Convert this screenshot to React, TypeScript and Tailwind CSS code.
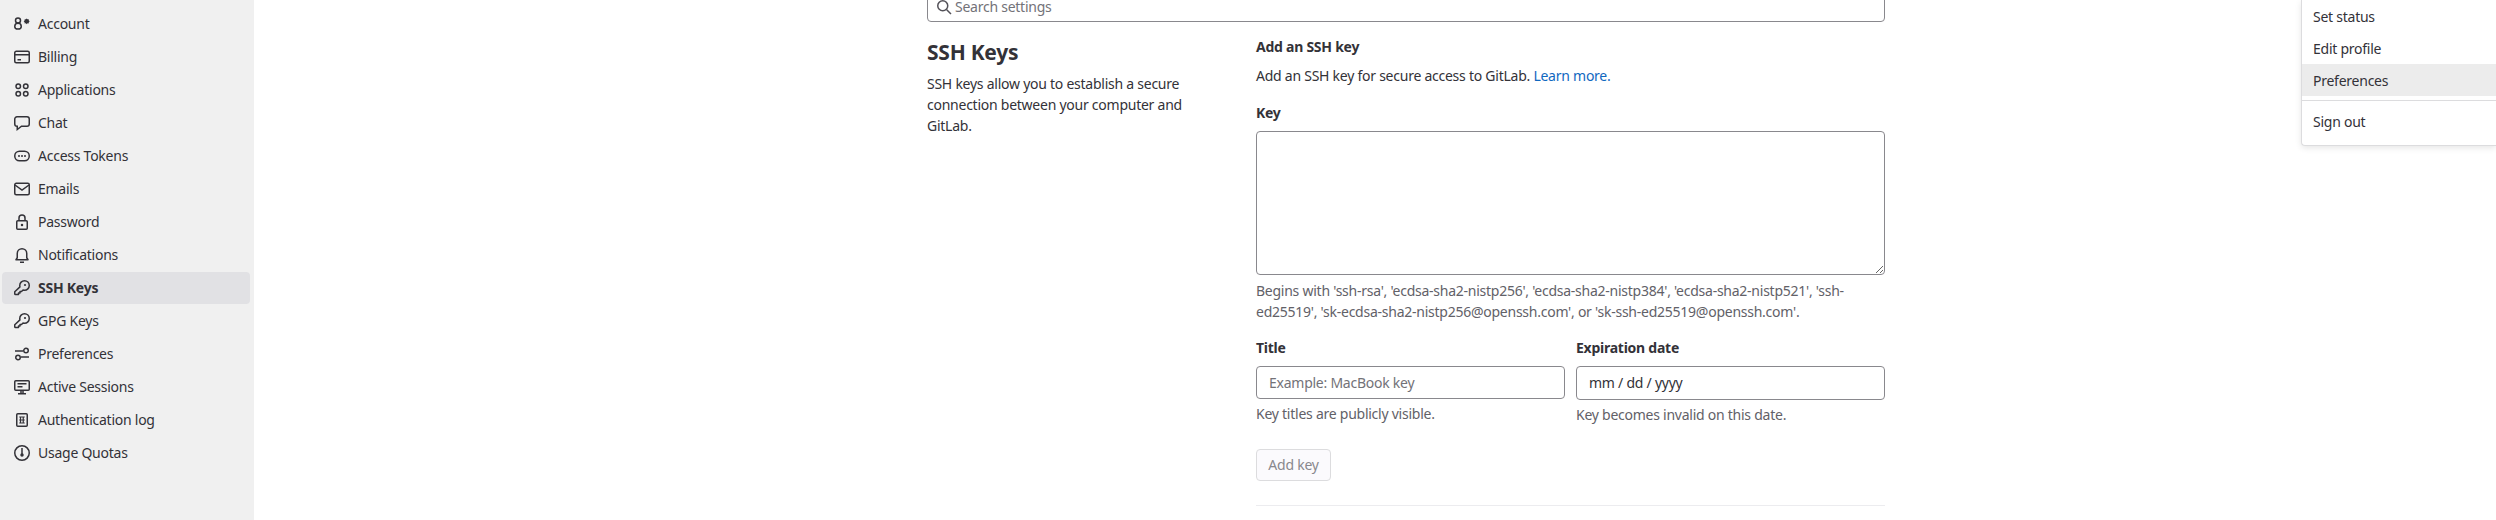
import React from "react";

const s = { fill: "none", stroke: "currentColor", strokeWidth: 1.5 } as const;

const keyIcon = (
  <>
    <path
      d="M5.75 5.5a4.75 4.75 0 1 1 4.75 4.75c-.5 0-1-.08-1.45-.22L7.5 11.5H6V13H4.5v1.5H1.5a.75.75 0 0 1-.75-.75v-2L5.95 6.9a4.8 4.8 0 0 1-.2-1.4z"
      {...s}
      strokeLinejoin="round"
    />
    <circle cx="11" cy="5" r="1.1" fill="currentColor" />
  </>
);

const icons: Record<string, React.ReactNode> = {
  account: (
    <>
      <circle cx="4" cy="4.4" r="2.5" {...s} />
      <path d="M4 7.3c-2.2 0-3.25 1.4-3.25 3.1S1.8 13 4 13s3.25-.9 3.25-2.6S6.2 7.3 4 7.3z" {...s} />
      <path d="M12.7 2.4l.8.9 1.2-.1.1 1.2.9.9-.9.9-.1 1.2-1.2-.1-.8.9-.8-.9-1.2.1-.1-1.2-.9-.9.9-.9.1-1.2 1.2.1z" fill="currentColor" />
    </>
  ),
  billing: (
    <>
      <rect x="0.75" y="2.25" width="14.5" height="11.5" rx="1.5" {...s} />
      <path d="M1 5.75h14M3.5 10.75h3.5" {...s} />
    </>
  ),
  apps: (
    <>
      <circle cx="4.25" cy="4.25" r="2.25" {...s} />
      <circle cx="11.75" cy="4.25" r="2.25" {...s} />
      <circle cx="4.25" cy="11.75" r="2.25" {...s} />
      <circle cx="11.75" cy="11.75" r="2.25" {...s} />
    </>
  ),
  chat: <path d="M3 1.75h10A2.25 2.25 0 0 1 15.25 4v5A2.25 2.25 0 0 1 13 11.25H7.5L3.25 14.5v-3.25H3A2.25 2.25 0 0 1 .75 9V4A2.25 2.25 0 0 1 3 1.75z" {...s} />,
  token: (
    <>
      <rect x="0.75" y="3.25" width="14.5" height="9.5" rx="4.75" {...s} />
      <circle cx="5" cy="8" r="1" fill="currentColor" />
      <circle cx="8" cy="8" r="1" fill="currentColor" />
      <circle cx="11" cy="8" r="1" fill="currentColor" />
    </>
  ),
  mail: (
    <>
      <rect x="0.75" y="2.25" width="14.5" height="11.5" rx="1.5" {...s} />
      <path d="M1 4l7 5 7-5" {...s} />
    </>
  ),
  lock: (
    <>
      <rect x="2.75" y="6.75" width="10.5" height="8.5" rx="1" {...s} />
      <path d="M5 6.5V4a3 3 0 0 1 6 0v2.5" {...s} />
      <circle cx="8" cy="11" r="1.25" fill="currentColor" />
    </>
  ),
  bell: (
    <>
      <path d="M2 12.75h12l-1.25-2V6.5a4.75 4.75 0 0 0-9.5 0v4.25L2 12.75z" {...s} strokeLinejoin="round" />
      <path d="M6 15.25h4" {...s} />
    </>
  ),
  key: keyIcon,
  prefs: (
    <>
      <path d="M1 5h8M7 11h8" {...s} />
      <circle cx="12" cy="4.5" r="2.25" {...s} />
      <circle cx="4" cy="11.5" r="2.25" {...s} />
    </>
  ),
  monitor: (
    <>
      <rect x="0.75" y="1.75" width="14.5" height="9.5" rx="1" {...s} />
      <path d="M3.5 4.75h9M3.5 7.75h5M7 11.5v3M9 11.5v3M4 14.75h8" {...s} />
    </>
  ),
  log: (
    <>
      <rect x="2.75" y="1.75" width="10.5" height="12.5" rx="1" {...s} />
      <path d="M5.25 5h5.5M5.25 8h5.5M5.25 11h5.5M6.5 4.5v7M9.25 4.5v7" stroke="currentColor" strokeWidth="1.2" fill="none" />
    </>
  ),
  quota: (
    <>
      <circle cx="8" cy="8" r="7.25" {...s} />
      <path d="M8 3v6" {...s} />
      <circle cx="8" cy="10" r="1.75" fill="currentColor" />
    </>
  ),
};

const nav: [string, string][] = [
  ["account", "Account"],
  ["billing", "Billing"],
  ["apps", "Applications"],
  ["chat", "Chat"],
  ["token", "Access Tokens"],
  ["mail", "Emails"],
  ["lock", "Password"],
  ["bell", "Notifications"],
  ["key", "SSH Keys"],
  ["key", "GPG Keys"],
  ["prefs", "Preferences"],
  ["monitor", "Active Sessions"],
  ["log", "Authentication log"],
  ["quota", "Usage Quotas"],
];

function Icon({ name }: { name: string }) {
  return (
    <svg viewBox="0 0 16 16" className="w-4 h-4 shrink-0">
      {icons[name]}
    </svg>
  );
}

export default function App() {
  return (
    <div className="relative flex h-[520px] w-[2496px] overflow-hidden bg-white text-[14px] leading-5 text-[#333238] tracking-[-0.25px] font-['Noto_Sans','Liberation_Sans',sans-serif]">
      <aside className="flex w-[254px] shrink-0 flex-col gap-px bg-[#f0f0f0] pl-0.5 pr-1 pt-2">
        {nav.map(([icon, label]) => {
          const active = label === "SSH Keys";
          return (
            <div
              key={label}
              className={`flex h-8 items-center gap-2 rounded pl-3 text-[#333238] ${active ? "bg-[#e1e1e4] font-bold" : ""}`}
            >
              <Icon name={icon} />
              <span>{label}</span>
            </div>
          );
        })}
      </aside>

      <main className="ml-[673px] w-[958px]">
        <div className="-mt-[10px] flex h-8 items-center gap-[3px] rounded border border-[#89888d] pl-2 pt-0.5 text-[#737278]">
          <svg viewBox="0 0 16 16" className="h-4 w-4 shrink-0 text-[#535158]" fill="none" stroke="currentColor" strokeWidth="1.5">
            <circle cx="6.75" cy="6.75" r="5" />
            <path d="M10.5 10.5l4.5 4.5" />
          </svg>
          <span>Search settings</span>
        </div>

        <div className="flex">
          <section className="w-[329px] shrink-0 pt-4">
            <h2 className="text-[21px] font-bold leading-7 text-[#333238]">SSH Keys</h2>
            <p className="mt-[7px] w-[280px] leading-[21px]">
              SSH keys allow you to establish a secure connection between your computer and GitLab.
            </p>
          </section>

          <section className="w-[629px] pt-[15px]">
            <h3 className="font-bold leading-5">Add an SSH key</h3>
            <p className="mt-[9px]">
              Add an SSH key for secure access to GitLab. <span className="text-[#1068bf]">Learn more.</span>
            </p>
            <label className="mt-[17px] block font-bold">Key</label>
            <textarea className="mt-2 block h-[144px] w-full rounded border border-[#89888d] bg-white" />
            <p className="mt-[5px] leading-[21px] text-[#626168]">
              Begins with 'ssh-rsa', 'ecdsa-sha2-nistp256', 'ecdsa-sha2-nistp384', 'ecdsa-sha2-nistp521', 'ssh-ed25519', 'sk-ecdsa-sha2-nistp256@openssh.com', or 'sk-ssh-ed25519@openssh.com'.
            </p>
            <div className="mt-4 flex gap-[11px]">
              <div className="w-[309px]">
                <label className="block font-bold">Title</label>
                <input
                  placeholder="Example: MacBook key"
                  className="mt-2 block h-[33px] w-full rounded border border-[#89888d] px-3 placeholder:text-[#737278]"
                />
                <p className="mt-[5px] text-[#626168]">Key titles are publicly visible.</p>
              </div>
              <div className="w-[309px]">
                <label className="block font-bold">Expiration date</label>
                <div className="mt-2 flex h-[34px] items-center rounded border border-[#89888d] px-3 text-[#333238]">mm / dd / yyyy</div>
                <p className="mt-[5px] text-[#626168]">Key becomes invalid on this date.</p>
              </div>
            </div>
            <button className="mt-6 block h-8 w-[75px] rounded border border-[#dcdcde] bg-[#fbfafd] text-[#89888d]">Add key</button>
            <hr className="mt-6 border-[#ececef]" />
          </section>
        </div>
      </main>

      <div className="absolute right-0 top-0 w-[195px] rounded-bl border-b border-l border-[#dcdcde] bg-white pb-2 shadow-[0_2px_6px_rgba(0,0,0,0.1)]">
        <div className="flex h-8 items-center pl-[11px] pt-0.5">Set status</div>
        <div className="flex h-8 items-center pl-[11px] pt-0.5">Edit profile</div>
        <div className="flex h-8 items-center bg-[#ececec] pl-[11px] pt-0.5">Preferences</div>
        <div className="my-1 h-px bg-[#dcdcde]" />
        <div className="mt-1 flex h-8 items-center pl-[11px] pt-0.5">Sign out</div>
      </div>
    </div>
  );
}
